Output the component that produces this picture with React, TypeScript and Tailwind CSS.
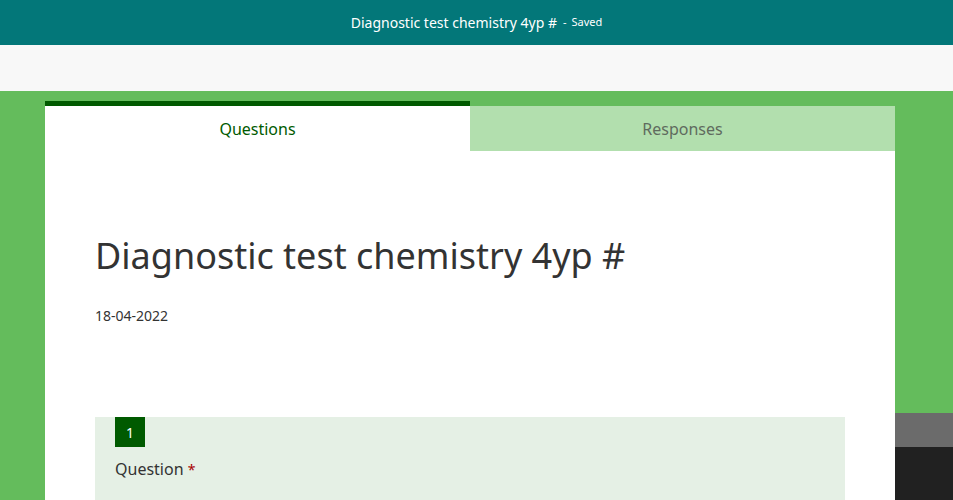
export default function App() {
  const font = { fontFamily: '"Segoe UI", "Noto Sans", "Open Sans", sans-serif' };
  return (
    <div className="w-[953px] h-[500px] overflow-hidden bg-[#64bc5c]" style={font}>
      <header className="h-[45px] bg-[#037779] flex items-center justify-center text-white">
        <span className="text-[14px]">Diagnostic test chemistry 4yp #</span>
        <span className="text-[11px] ml-[6px]">-</span>
        <span className="text-[11px] ml-[5px]">Saved</span>
      </header>
      <div className="h-[46px] bg-[#f8f8f8]" />

      <div className="flex h-[409px]">
        <div className="w-[45px]" />
        <main className="w-[850px] pt-[10px] flex flex-col">
          <div className="flex items-end">
            <button className="w-[425px] h-[50px] bg-white border-t-[5px] border-[#005a00] text-[#005a00] text-[16px]">
              Questions
            </button>
            <button className="w-[425px] h-[45px] bg-[#b2dfae] text-[#5f6b5e] text-[16px]">
              Responses
            </button>
          </div>
          <div className="flex-1 bg-white px-[50px] pt-[81px]">
            <h1 className="text-[36px] leading-[48px] text-[#333333]">
              Diagnostic test chemistry 4yp #
            </h1>
            <p className="mt-[25px] text-[14px] text-[#333333]">18-04-2022</p>
            <section className="mt-[91px] bg-[#e5f0e5] px-[20px] h-[200px]">
              <div className="w-[30px] h-[30px] bg-[#005a00] text-white text-[14px] flex items-center justify-center">
                1
              </div>
              <div className="mt-[10px] text-[16px] text-[#333333]">
                Question <span className="text-[#a80000] text-[14px]">*</span>
              </div>
            </section>
          </div>
        </main>
        <div className="flex-1 flex flex-col">
          <div className="h-[322px] bg-[#64bc5c]" />
          <div className="h-[34px] bg-[#6b6b6b]" />
          <div className="flex-1 bg-[#212121]" />
        </div>
      </div>
    </div>
  );
}
